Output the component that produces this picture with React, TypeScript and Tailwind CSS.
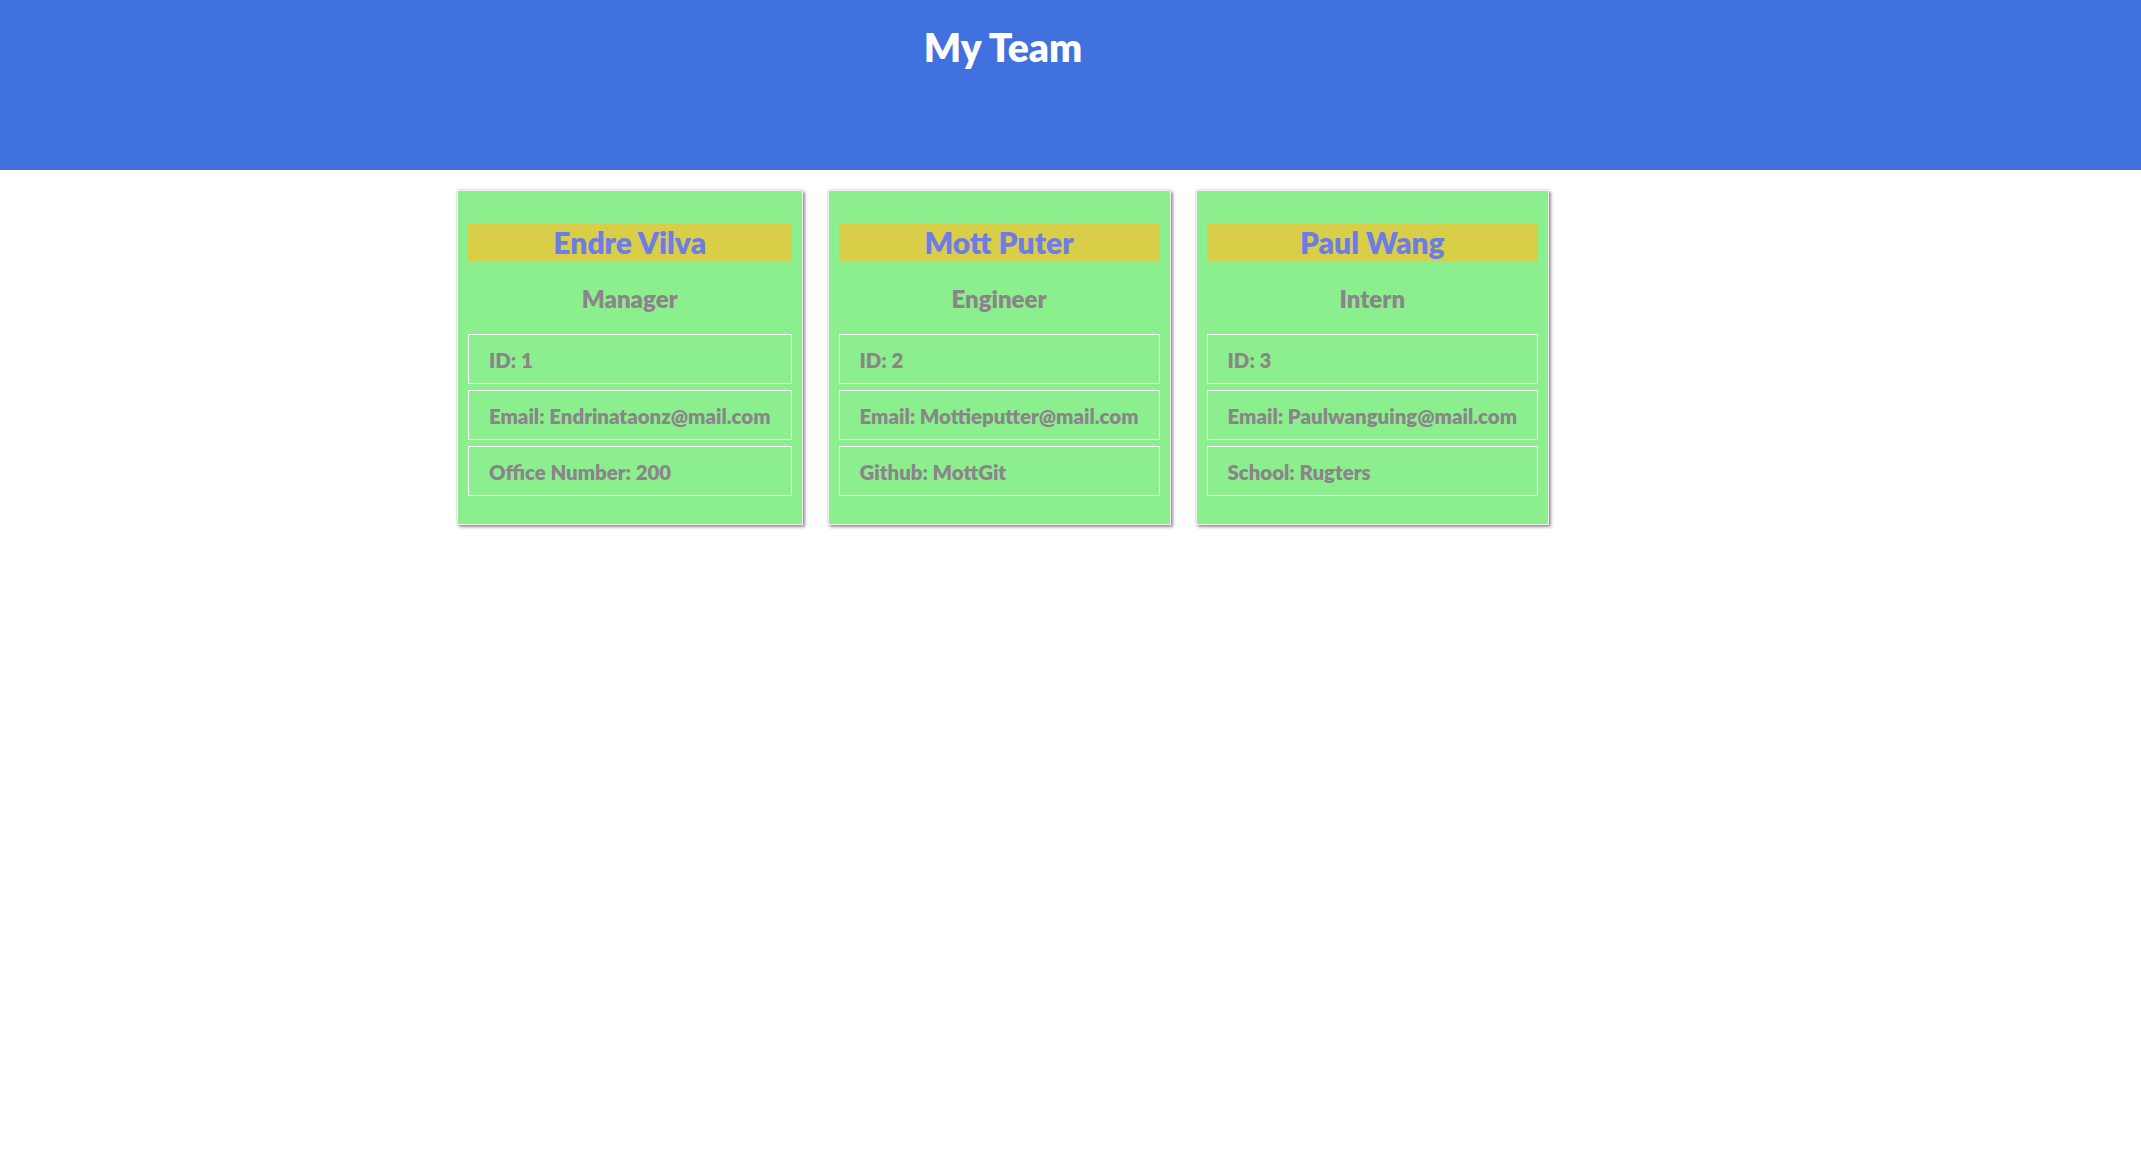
const team = [
  { name: "Endre Vilva", role: "Manager", id: 1, email: "Endrinataonz@mail.com", extra: "Office Number: 200" },
  { name: "Mott Puter", role: "Engineer", id: 2, email: "Mottieputter@mail.com", extra: "Github: MottGit" },
  { name: "Paul Wang", role: "Intern", id: 3, email: "Paulwanguing@mail.com", extra: "School: Rugters" },
];

function MemberCard({ m }: { m: (typeof team)[number] }) {
  return (
    <div className="w-fit border border-[#f2f2f2] bg-[#8cef8d] px-[10px] pt-[32px] pb-[28px] shadow-[0_0_2px_rgba(0,0,0,0.25),2px_2px_3px_rgba(0,0,0,0.4)]">
      <h2 className="h-[38px] bg-[#d8ce48] text-center text-[30px] leading-[38px] font-extrabold text-[#6e7de6]">
        {m.name}
      </h2>
      <h3 className="mt-[23px] mb-[21px] h-[29px] text-center text-[24px] leading-[30px] font-extrabold text-[#8b858b]">
        {m.role}
      </h3>
      <ul className="flex flex-col gap-[6px]">
        <li className="flex h-[50px] items-center border border-white px-[20px] pt-[2px] text-[20.4px] font-extrabold whitespace-nowrap text-[#8b858b]">
          ID: {m.id}
        </li>
        <li className="flex h-[50px] items-center border border-white px-[20px] pt-[2px] text-[20.4px] font-extrabold whitespace-nowrap text-[#8b858b]">
          Email: {m.email}
        </li>
        <li className="flex h-[50px] items-center border border-white px-[20px] pt-[2px] text-[20.4px] font-extrabold whitespace-nowrap text-[#8b858b]">
          {m.extra}
        </li>
      </ul>
    </div>
  );
}

export default function App() {
  return (
    <div className="min-h-screen bg-white font-['Lato',sans-serif]">
      <header className="h-[170px] bg-[#4171de] pr-[135px] pt-[23px]">
        <h1 className="text-center text-[39px] leading-[48px] font-extrabold text-white">My Team</h1>
      </header>
      <main className="flex items-start justify-center gap-[25px] pt-[20px] pr-[135px]">
        {team.map((m) => (
          <MemberCard key={m.id} m={m} />
        ))}
      </main>
    </div>
  );
}
